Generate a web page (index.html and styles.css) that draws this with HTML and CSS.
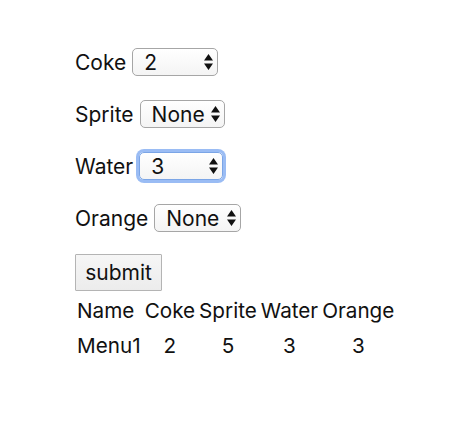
FILE: index.html
```html
<!DOCTYPE html>
<html>
<head>
<meta charset="utf-8">
<link rel="stylesheet" href="styles.css">
</head>
<body>
<div class="page">
  <form class="order">
    <label class="row">Coke
      <span class="sel w86">
        <select><option>2</option></select>
        <svg class="arrows" width="9" height="16" viewBox="0 0 9 16"><path d="M4.5 0 L9 6.5 L0 6.5 Z M0 9.5 L9 9.5 L4.5 16 Z" fill="#111"/></svg>
      </span>
    </label>
    <label class="row">Sprite
      <span class="sel w85">
        <select><option>None</option></select>
        <svg class="arrows" width="9" height="16" viewBox="0 0 9 16"><path d="M4.5 0 L9 6.5 L0 6.5 Z M0 9.5 L9 9.5 L4.5 16 Z" fill="#111"/></svg>
      </span>
    </label>
    <label class="row">Water
      <span class="sel w84 focused">
        <select><option>3</option></select>
        <svg class="arrows" width="9" height="16" viewBox="0 0 9 16"><path d="M4.5 0 L9 6.5 L0 6.5 Z M0 9.5 L9 9.5 L4.5 16 Z" fill="#111"/></svg>
      </span>
    </label>
    <label class="row">Orange
      <span class="sel w87">
        <select><option>None</option></select>
        <svg class="arrows" width="9" height="16" viewBox="0 0 9 16"><path d="M4.5 0 L9 6.5 L0 6.5 Z M0 9.5 L9 9.5 L4.5 16 Z" fill="#111"/></svg>
      </span>
    </label>
    <div class="actions"><button type="button" class="submit">submit</button></div>
  </form>
  <table class="menu">
    <tr><td class="first">Name</td><td>Coke</td><td>Sprite</td><td>Water</td><td>Orange</td></tr>
    <tr><td class="first">Menu1</td><td>2</td><td>5</td><td>3</td><td>3</td></tr>
  </table>
</div>
</body>
</html>
```
FILE: styles.css
```css
html, body {
  margin: 0;
  background: #fff;
}
body {
  font-family: Inter, "Liberation Sans", Arial, sans-serif;
  color: #111;
}
.page {
  padding: 48px 0 0 75px;
}
.order {
  display: flex;
  flex-direction: column;
  align-items: flex-start;
  gap: 24px;
}
.row {
  display: flex;
  align-items: center;
  gap: 6px;
  font-size: 21px;
  height: 28px;
}
.sel {
  position: relative;
  display: inline-block;
  height: 28px;
}
.sel select {
  -webkit-appearance: none;
  appearance: none;
  box-sizing: border-box;
  width: 100%;
  height: 28px;
  margin: 0;
  padding: 0 0 0 11px;
  border: 1px solid #a6a6a6;
  border-radius: 5px;
  background: linear-gradient(#ffffff, #f4f4f4);
  font-family: Inter, "Liberation Sans", Arial, sans-serif;
  font-size: 21px;
  color: #111;
  outline: none;
}
.w84 { width: 84px; }
.w85 { width: 85px; }
.w86 { width: 86px; }
.w87 { width: 87px; }
.sel .arrows {
  position: absolute;
  right: 5px;
  top: 6px;
  pointer-events: none;
}
.sel.focused select {
  border-color: #7ba5e6;
  box-shadow: 0 0 0 3px rgba(120, 165, 240, 0.75);
}
.actions {
  margin-top: -2px;
}
.submit {
  box-sizing: border-box;
  width: 87px;
  height: 37px;
  margin: 0;
  padding: 0;
  border: 1px solid #b4b4b4;
  border-radius: 1px;
  background: linear-gradient(#f6f6f6, #ececec);
  font-family: Inter, "Liberation Sans", Arial, sans-serif;
  font-size: 21px;
  color: #111;
}
.menu {
  border-spacing: 2px;
  font-family: Inter, "Liberation Sans", sans-serif;
  font-size: 20.7px;
  margin: 1px 0 0 -1px;
}
.menu td {
  padding: 4px 1px;
  line-height: 25px;
  text-align: center;
}
.menu td.first {
  text-align: left;
}
```
